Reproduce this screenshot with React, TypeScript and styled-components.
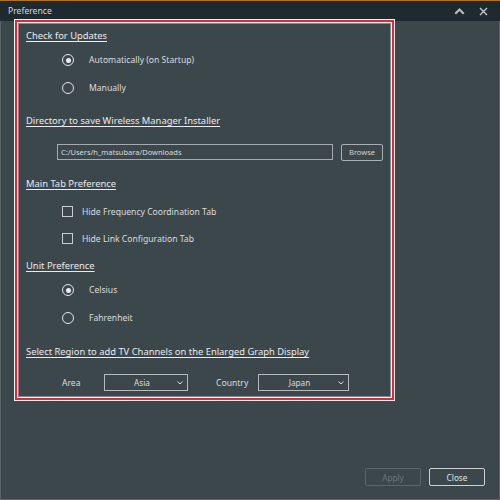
import React, { useState } from 'react';
import styled, { createGlobalStyle } from 'styled-components';

const GlobalStyle = createGlobalStyle`
    html, body {
        margin: 0;
        padding: 0;
        background: #3c474c;
    }
    * {
        box-sizing: border-box;
    }
`;

const FONT = `"Noto Sans", "Open Sans", sans-serif`;

const Window = styled.div`
    width: 500px;
    height: 500px;
    display: flex;
    flex-direction: column;
    font-family: ${FONT};
    color: #dcdfe0;
    border-top: 1px solid #a8742f;
    overflow: hidden;
`;

const TitleBar = styled.div`
    height: 20px;
    flex: none;
    display: flex;
    align-items: center;
    padding: 0 12px 0 8px;
    background: #1e2930;
    font-size: 8.6px;
    color: #d6dadc;
`;

const Title = styled.span`
    flex: 1;
`;

const TitleButtons = styled.div`
    display: flex;
    align-items: center;
    gap: 14px;
`;

const Body = styled.div`
    flex: 1;
    display: flex;
    flex-direction: column;
    background: #3c474c;
    border: 1px solid #5a6469;
    border-top: none;
    padding: 0 14px 13px 13px;
`;

// highlight frame: white / red / white / grey rings
const Frame = styled.div`
    margin-top: -2px;
    width: 381px;
    height: 382px;
    border: 1px solid #f2f2f2;
    box-shadow: inset 0 0 0 2px #e0283a, inset 0 0 0 3px #f4f4f4, inset 0 0 0 4px #7f898e;
    padding: 4px 7px 4px 11px;
    display: flex;
    flex-direction: column;
    position: relative;
    z-index: 2;
`;

const Header = styled.div<{ $gap: number }>`
    margin-top: ${(p) => p.$gap}px;
    height: 16px;
    line-height: 16px;
    font-size: 9.4px;
    color: #e8eaeb;
    text-decoration: underline;
    text-underline-offset: 2px;
    white-space: nowrap;
`;

const OptionList = styled.div<{ $gap: number }>`
    margin-top: ${(p) => p.$gap}px;
    padding-left: 36px;
    display: flex;
    flex-direction: column;
`;

const OptionRow = styled.label<{ $h: number }>`
    height: ${(p) => p.$h}px;
    display: flex;
    align-items: center;
    font-size: 8.6px;
    color: #d9dcde;
    cursor: pointer;
    white-space: nowrap;
`;

const RadioRing = styled.span<{ $on: boolean }>`
    width: 12px;
    height: 12px;
    border-radius: 50%;
    border: 1.5px solid #e4e6e7;
    margin-right: 15px;
    display: flex;
    align-items: center;
    justify-content: center;
    flex: none;

    &::after {
        content: '';
        width: 5px;
        height: 5px;
        border-radius: 50%;
        background: #eceeef;
        display: ${(p) => (p.$on ? 'block' : 'none')};
    }
`;

const CheckBox = styled.span`
    width: 11px;
    height: 11px;
    border: 1px solid #c9cdcf;
    margin-right: 9px;
    flex: none;
`;

const DirRow = styled.div`
    margin-top: 14px;
    padding-left: 31px;
    height: 18px;
    display: flex;
    align-items: center;
`;

const PathInput = styled.div`
    width: 276px;
    height: 16px;
    border: 1px solid #a3abaf;
    padding-left: 3px;
    display: flex;
    align-items: center;
    font-size: 7.5px;
    color: #d9dcde;
    white-space: nowrap;
`;

const SmallButton = styled.button`
    margin-left: 8px;
    width: 42px;
    height: 17px;
    border: 1px solid #a9b0b4;
    border-radius: 2px;
    background: transparent;
    color: #cfd3d5;
    font-family: ${FONT};
    font-size: 7.5px;
    padding: 0;
`;

const RegionRow = styled.div`
    margin-top: 14px;
    padding-left: 36px;
    height: 17px;
    display: flex;
    align-items: center;
    font-size: 8.6px;
    color: #d9dcde;
`;

const RegionLabel = styled.span<{ $w: number }>`
    width: ${(p) => p.$w}px;
    flex: none;
`;

const Select = styled.div<{ $w: number; $gap: number }>`
    width: ${(p) => p.$w}px;
    margin-right: ${(p) => p.$gap}px;
    height: 17px;
    border: 1px solid #b4babd;
    position: relative;
    display: flex;
    align-items: center;
    justify-content: center;
    padding-right: 8px;
    font-size: 8.2px;
    color: #d9dcde;

    svg {
        position: absolute;
        right: 4px;
        top: 6px;
    }
`;

const Spacer = styled.div`
    flex: 1;
`;

const Footer = styled.div`
    display: flex;
    justify-content: flex-end;
    gap: 8px;
`;

const DialogButton = styled.button<{ $disabled?: boolean }>`
    width: 56px;
    height: 18px;
    border-radius: 2px;
    border: 1px solid ${(p) => (p.$disabled ? '#5b666b' : '#cdd1d3')};
    background: transparent;
    color: ${(p) => (p.$disabled ? '#6b767b' : '#dfe2e3')};
    font-family: ${FONT};
    font-size: 8.2px;
    padding: 0;
`;

const ChevronUp = () => (
    <svg width="11" height="8" viewBox="0 0 11 8">
        <path d="M0.5 6 L5.5 1 L10.5 6 L9 7.5 L5.5 4 L2 7.5 Z" fill="#b8bec1" />
    </svg>
);

const CloseX = () => (
    <svg width="9" height="9" viewBox="0 0 9 9">
        <path d="M1 1 L8 8 M8 1 L1 8" stroke="#c3c8cb" strokeWidth="1.4" />
    </svg>
);

const Caret = () => (
    <svg width="6" height="4" viewBox="0 0 6 4">
        <path d="M0.5 0.5 L3 3 L5.5 0.5" stroke="#d9dcde" strokeWidth="1" fill="none" />
    </svg>
);

const App: React.FC = () => {
    const [updateMode, setUpdateMode] = useState('auto');
    const [unit, setUnit] = useState('celsius');

    return (
        <>
            <GlobalStyle />
            <Window>
                <TitleBar>
                    <Title>Preference</Title>
                    <TitleButtons>
                        <ChevronUp />
                        <CloseX />
                    </TitleButtons>
                </TitleBar>
                <Body>
                    <Frame>
                        <Header $gap={4}>Check for Updates</Header>
                        <OptionList $gap={2}>
                            <OptionRow $h={28} onClick={() => setUpdateMode('auto')}>
                                <RadioRing $on={updateMode === 'auto'} />
                                Automatically (on Startup)
                            </OptionRow>
                            <OptionRow $h={28} onClick={() => setUpdateMode('manual')}>
                                <RadioRing $on={updateMode === 'manual'} />
                                Manually
                            </OptionRow>
                        </OptionList>

                        <Header $gap={11}>Directory to save Wireless Manager Installer</Header>
                        <DirRow>
                            <PathInput>C:/Users/h_matsubara/Downloads</PathInput>
                            <SmallButton>Browse</SmallButton>
                        </DirRow>

                        <Header $gap={15}>Main Tab Preference</Header>
                        <OptionList $gap={6}>
                            <OptionRow $h={27}>
                                <CheckBox />
                                Hide Frequency Coordination Tab
                            </OptionRow>
                            <OptionRow $h={27}>
                                <CheckBox />
                                Hide Link Configuration Tab
                            </OptionRow>
                        </OptionList>

                        <Header $gap={6}>Unit Preference</Header>
                        <OptionList $gap={2}>
                            <OptionRow $h={28} onClick={() => setUnit('celsius')}>
                                <RadioRing $on={unit === 'celsius'} />
                                Celsius
                            </OptionRow>
                            <OptionRow $h={28} onClick={() => setUnit('fahrenheit')}>
                                <RadioRing $on={unit === 'fahrenheit'} />
                                Fahrenheit
                            </OptionRow>
                        </OptionList>

                        <Header $gap={12}>Select Region to add TV Channels on the Enlarged Graph Display</Header>
                        <RegionRow>
                            <RegionLabel $w={42}>Area</RegionLabel>
                            <Select $w={84} $gap={28}>
                                Asia
                                <Caret />
                            </Select>
                            <RegionLabel $w={42}>Country</RegionLabel>
                            <Select $w={91} $gap={0}>
                                Japan
                                <Caret />
                            </Select>
                        </RegionRow>
                    </Frame>
                    <Spacer />
                    <Footer>
                        <DialogButton $disabled>Apply</DialogButton>
                        <DialogButton>Close</DialogButton>
                    </Footer>
                </Body>
            </Window>
        </>
    );
};

export default App;
